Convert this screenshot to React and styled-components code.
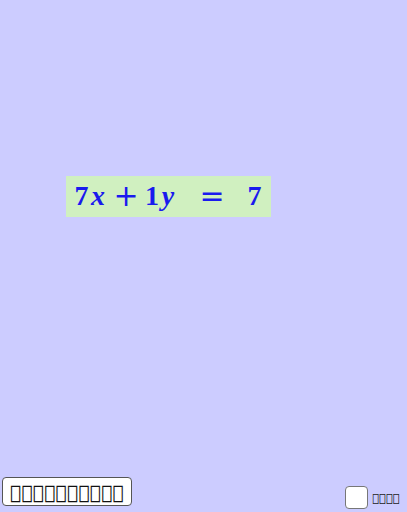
import React from "react";
import styled, { createGlobalStyle } from "styled-components";

const Global = createGlobalStyle`
  html, body { margin: 0; padding: 0; background: #ccccff; }
  #root { width: 407px; height: 512px; }
`;

const Page = styled.div`
  width: 407px;
  height: 512px;
  background: #ccccff;
  display: flex;
  flex-direction: column;
  overflow: hidden;
  font-family: "DejaVu Sans", sans-serif;
`;

const Stage = styled.div`
  flex: 1;
  padding: 176px 0 0 66px;
`;

const EquationBox = styled.div`
  width: 205px;
  height: 41px;
  box-sizing: border-box;
  background: #d0f0c0;
  display: flex;
  align-items: center;
  padding: 0 0 2px 8px;
  color: #1a1aee;
  font-family: "Liberation Serif", "Times New Roman", serif;
  font-size: 28px;
  font-weight: bold;
  line-height: 1;
`;

const Glyph = styled.span`
  display: inline-flex;
  justify-content: center;
  width: ${(p) => p.$w}px;
  margin-left: ${(p) => p.$ml || 0}px;
  font-style: ${(p) => (p.$italic ? "italic" : "normal")};
`;

const Op = styled(Glyph)`
  font-family: "DejaVu Sans", sans-serif;
  font-weight: normal;
  font-size: 30px;
`;

const Footer = styled.div`
  display: flex;
  justify-content: space-between;
  align-items: flex-end;
  padding: 0 7px 3px 2px;
`;

const Button = styled.button`
  width: 130px;
  height: 29px;
  margin-bottom: 3px;
  background: #ffffff;
  border: 1px solid #555;
  border-radius: 4px;
  padding: 0;
  font-family: "DejaVu Sans", sans-serif;
  font-size: 19px;
  color: #111;
  display: flex;
  align-items: center;
  justify-content: center;
`;

const CheckRow = styled.label`
  display: flex;
  align-items: center;
  gap: 4px;
`;

const Box = styled.span`
  width: 23px;
  height: 23px;
  box-sizing: border-box;
  background: #fff;
  border: 1px solid #777;
  border-radius: 4px;
`;

const Label = styled.span`
  font-family: "DejaVu Sans", sans-serif;
  font-size: 11.5px;
  color: #222;
`;

const tofu = (n) => "\uE000".repeat(n);

export default function App() {
  return (
    <Page>
      <Global />
      <Stage>
        <EquationBox>
          <Glyph $w={15}>7</Glyph>
          <Glyph $w={18} $italic>x</Glyph>
          <Op $w={22} $ml={8}>+</Op>
          <Glyph $w={14} $ml={8}>1</Glyph>
          <Glyph $w={18} $italic>y</Glyph>
          <Op $w={22} $ml={24}>=</Op>
          <Glyph $w={15} $ml={24}>7</Glyph>
        </EquationBox>
      </Stage>
      <Footer>
        <Button>{tofu(10)}</Button>
        <CheckRow>
          <Box />
          <Label>{tofu(4)}</Label>
        </CheckRow>
      </Footer>
    </Page>
  );
}
